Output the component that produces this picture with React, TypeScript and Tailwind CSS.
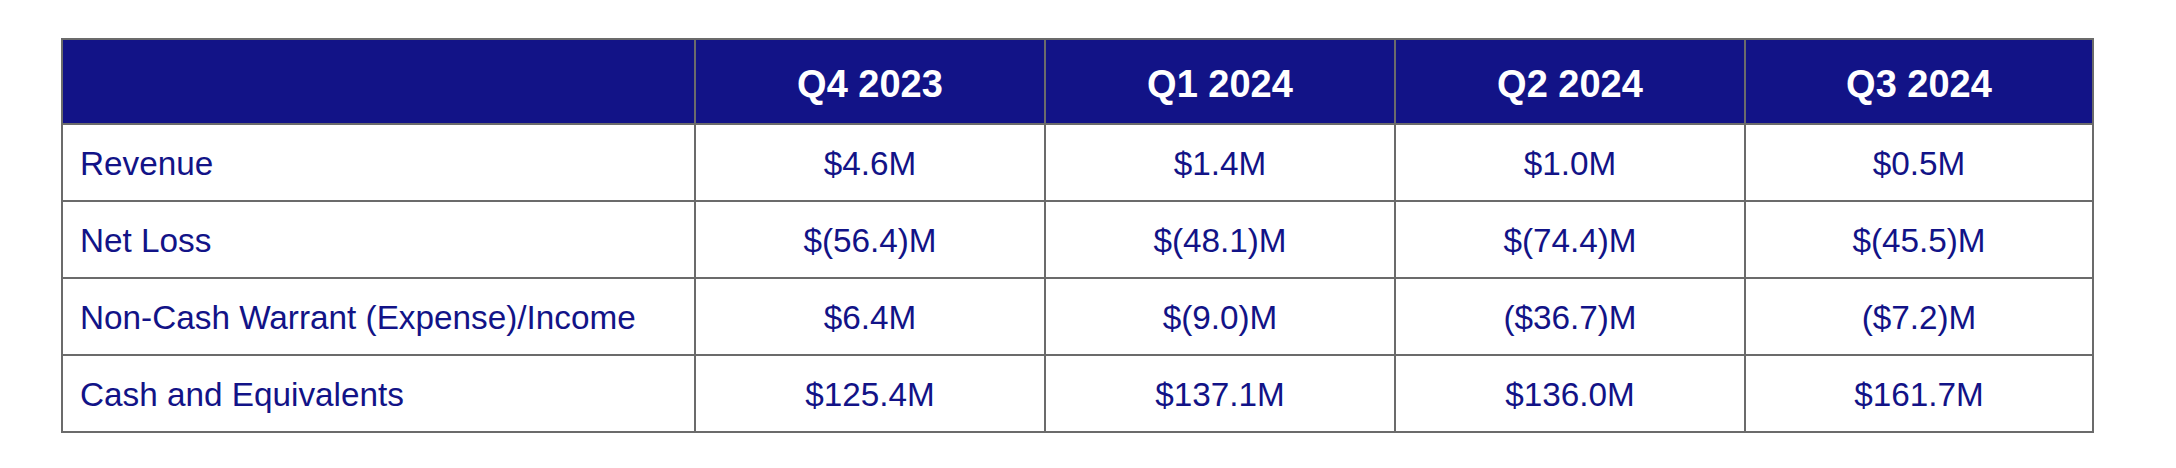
const headers = ['Q4 2023', 'Q1 2024', 'Q2 2024', 'Q3 2024'];

const rows: { label: string; values: string[] }[] = [
  { label: 'Revenue', values: ['$4.6M', '$1.4M', '$1.0M', '$0.5M'] },
  { label: 'Net Loss', values: ['$(56.4)M', '$(48.1)M', '$(74.4)M', '$(45.5)M'] },
  { label: 'Non-Cash Warrant (Expense)/Income', values: ['$6.4M', '$(9.0)M', '($36.7)M', '($7.2)M'] },
  { label: 'Cash and Equivalents', values: ['$125.4M', '$137.1M', '$136.0M', '$161.7M'] },
];

export default function App() {
  return (
    <div className="w-[2176px] h-[468px] bg-white pt-[38px] pl-[61px] font-['Liberation_Sans',Arial,sans-serif]">
      <table className="table-fixed border-collapse w-[2031px]">
        <colgroup>
          <col className="w-[633px]" />
          <col className="w-[350px]" />
          <col className="w-[350px]" />
          <col className="w-[350px]" />
          <col className="w-[348px]" />
        </colgroup>
        <thead>
          <tr className="h-[85px] bg-[#121387]">
            <th className="border-2 border-[#6b6b6b]" />
            {headers.map((h) => (
              <th
                key={h}
                className="border-2 border-[#6b6b6b] text-center text-[38px] font-bold text-white pt-[6px]"
              >
                {h}
              </th>
            ))}
          </tr>
        </thead>
        <tbody>
          {rows.map((row) => (
            <tr key={row.label} className="h-[77px]">
              <td className="border-2 border-[#6b6b6b] pl-[17px] pt-[2px] text-left text-[33.3px] text-[#121387]">
                {row.label}
              </td>
              {row.values.map((v, i) => (
                <td
                  key={i}
                  className="border-2 border-[#6b6b6b] pt-[2px] text-center text-[33.3px] text-[#121387]"
                >
                  {v}
                </td>
              ))}
            </tr>
          ))}
        </tbody>
      </table>
    </div>
  );
}
